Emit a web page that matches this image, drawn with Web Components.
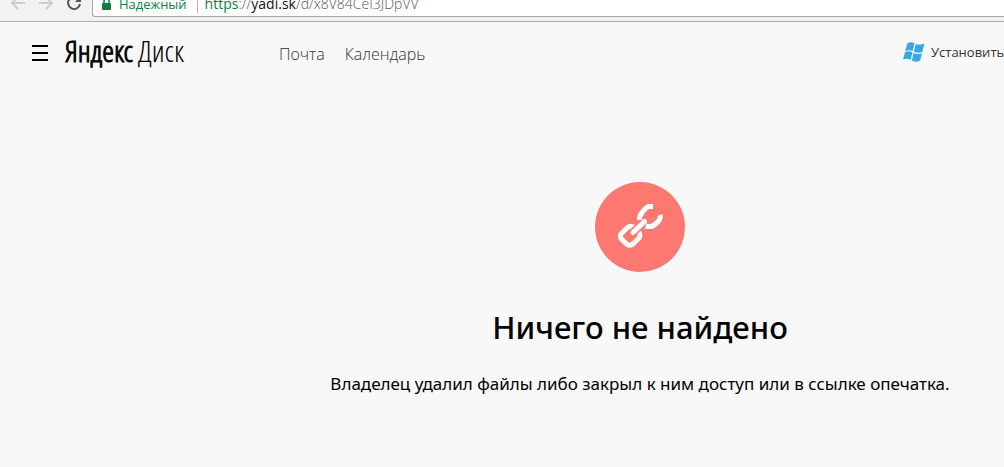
<!DOCTYPE html>
<html lang="ru">
<head>
<meta charset="utf-8">
<title>Яндекс Диск</title>
<style>
html, body { margin: 0; background: #f8f8f8; }
body { min-height: 100vh; overflow: hidden; font-family: "Noto Sans", "Open Sans", sans-serif; color: #000; }
</style>
</head>
<body>
<disk-page></disk-page>
<script>
function define(name, html) {
  const template = document.createElement('template');
  template.innerHTML = html;
  customElements.define(name, class extends HTMLElement {
    constructor() {
      super();
      this.attachShadow({ mode: 'open' }).append(template.content.cloneNode(true));
    }
  });
}

define('browser-bar', `
<style>
:host { display: flex; align-items: flex-end; height: 21px; overflow: hidden; background: #f2f2f2; border-bottom: 1px solid #adadad; font: 13px/20px "Open Sans", "Noto Sans", sans-serif; }
button { border: 0; padding: 0; margin: 0; background: none; width: 16px; height: 16px; flex: none; }
svg { display: block; }
.tools { display: flex; gap: 12px; padding: 0 10px 10px; flex: none; }
.address { flex: 1; display: flex; align-items: center; height: 26px; margin-bottom: 4px; box-sizing: border-box; border: 1px solid #a8a8a8; border-right: 0; border-radius: 3px 0 0 3px; background: #fff; padding: 0 9px; white-space: nowrap; }
.safe { color: #0b8043; margin-left: 8px; }
.line { width: 1px; height: 18px; background: #b5b5b5; margin: 0 7px 0 10px; }
.url { color: #555; font-size: 14px; font-weight: 300; }
.url b { font-weight: 400; color: #0b8043; }
.url i { font-style: normal; font-weight: 400; color: #111; }
</style>
<div class="tools">
<button aria-label="Назад"><svg width="16" height="16" viewBox="0 0 16 16" fill="none" stroke="#cbcbcb" stroke-width="2"><path d="M15 8H2M8 2L2 8l6 6"/></svg></button>
<button aria-label="Вперёд"><svg width="16" height="16" viewBox="0 0 16 16" fill="none" stroke="#cbcbcb" stroke-width="2"><path d="M1 8h13M8 2l6 6-6 6"/></svg></button>
<button aria-label="Обновить"><svg width="16" height="16" viewBox="0 0 16 16" fill="none" stroke="#555" stroke-width="2"><path d="M13 4.500A6 6 0 1 0 14 9"/><path d="M15 1v6H9z" fill="#555" stroke="none"/></svg></button>
</div>
<div class="address">
<svg width="9" height="12" viewBox="0 0 9 12"><path d="M2 6V3a2.500 2.500 0 0 1 5 0v3" fill="none" stroke="#0b8043" stroke-width="1.500"/><rect y="5" width="9" height="7" rx="1" fill="#0b8043"/></svg>
<span class="safe">Надежный</span><span class="line"></span>
<span class="url"><b>https</b>://<i>yadi.sk</i>/d/x8V84CeI3JDpVV</span>
</div>`);

define('disk-header', `
<style>
:host { display: flex; align-items: center; height: 62px; padding: 0 32px; white-space: nowrap; font-family: "Open Sans", "Noto Sans", sans-serif; }
button { border: 0; padding: 0; background: none; width: 16px; height: 16px; }
svg { display: block; }
a { color: inherit; text-decoration: none; }
.logo { margin-left: 17px; width: 120px; padding-bottom: 4px; font: 300 30px/32px "Open Sans Condensed Light", "Open Sans Condensed", "Liberation Sans Narrow", sans-serif; display: flex; gap: 5px; }
.logo b { font-weight: 300; -webkit-text-stroke: 1px #000; }
nav { display: flex; gap: 20px; margin-left: 94px; font-size: 16px; font-weight: 300; line-height: 24px; color: #333; padding-top: 2px; }
.install { display: flex; align-items: center; gap: 6px; margin-left: auto; width: 345px; padding-bottom: 2px; font-size: 13px; line-height: 20px; color: #333; }
</style>
<button aria-label="Меню"><svg width="16" height="16" viewBox="0 0 16 16"><path d="M0 0h16v2H0zM0 7h16v2H0zM0 14h16v2H0z"/></svg></button>
<a class="logo" href="#"><b>Яндекс</b><span>Диск</span></a>
<nav><a href="#">Почта</a><a href="#">Календарь</a></nav>
<a class="install" href="#">
<svg width="22" height="20" viewBox="0 0 22 20" fill="#36a9e1"><path d="M4.300 1.400Q8-.8 11.500 1.200L9.700 9Q6.500 7.300 2.200 9zM12.700 1.900Q16.500 3.700 21.500 1.600L19.300 10Q15 11.700 10.900 9.700zM2 10.200Q6 8.400 9.500 10.300L7.600 18Q4.500 15.900 0 17.600zM10.600 11Q14.500 12.900 19 11.200L17.200 18.400Q12.500 21 8.800 18.600z"/></svg>
<span>Установить Диск</span></a>`);

define('broken-link', `
<style>:host { display: block; } svg { display: block; }</style>
<svg width="90" height="90" viewBox="0 0 90 90" role="img" aria-label="Ссылка не работает">
<circle cx="45" cy="45" r="45" fill="#fc7871"/>
<g fill="none" stroke="#fff" stroke-width="5" stroke-linejoin="round">
<path d="M40 46L37 44.500Q34.500 44 32.500 45.500L26.500 51.500Q24.500 53.500 26 56.500L32 62.500Q35 64 37.500 62.500L43.500 56.500Q45.500 54.500 44.500 51.500L43 49"/>
<path d="M38 50.500L49.500 39.500" stroke="#fc7871" stroke-width="8" stroke-linecap="round"/>
<path d="M38 50.500L49.500 39.500" stroke-linecap="round"/>
<path d="M44.500 38Q44 34 47.500 30Q51 25 54 24.500L58 24.500"/>
<path d="M50.500 44Q54 45 57.500 44Q61 42 64 38.500Q66 35.500 65 33"/>
</g></svg>`);

define('not-found', `
<style>
:host { display: flex; flex-direction: column; align-items: center; padding-top: 98px; text-align: center; }
h1 { margin: 31px 0 0; font-size: 31px; line-height: 48px; font-weight: 500; }
p { margin: 21px 0 0; font-size: 17px; line-height: 24px; }
</style>
<broken-link></broken-link>
<h1><slot name="title"></slot></h1>
<p><slot></slot></p>`);

define('disk-page', `
<style>
:host { display: block; overflow: hidden; }
main { min-width: 1280px; }
</style>
<browser-bar></browser-bar>
<main>
<disk-header></disk-header>
<not-found><span slot="title">Ничего не найдено</span>Владелец удалил файлы либо закрыл к ним доступ или в ссылке опечатка.</not-found>
</main>`);
</script>
</body>
</html>
